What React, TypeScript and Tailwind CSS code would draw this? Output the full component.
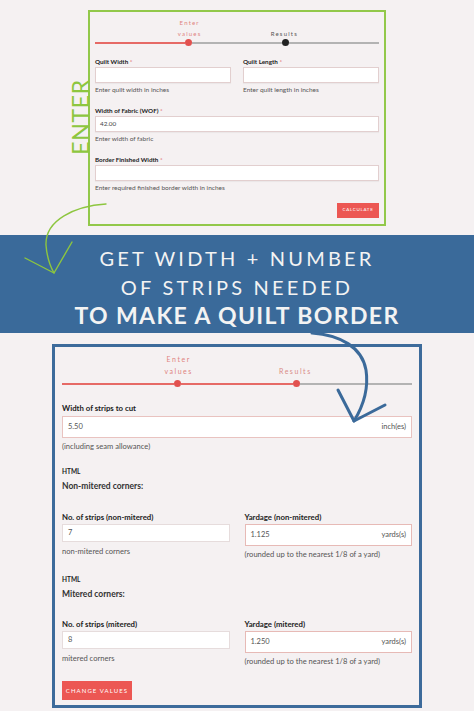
const font = { fontFamily: "Lato, 'Open Sans', sans-serif" };

function Stepper({
  size,
  done,
}: {
  size: "sm" | "md";
  done: boolean;
}) {
  const text =
    size === "sm"
      ? "text-[6px] leading-[11px] tracking-[0.2em]"
      : "text-[7px] leading-[12px] tracking-[0.22em]";
  return (
    <div>
      <div className={`grid grid-cols-6 text-center ${text}`}>
        <div className="col-span-2 col-start-2 text-[#e0837f]">
          Enter
          <br />
          values
        </div>
        <div
          className={`col-span-2 self-end ${done ? "text-[#d98b87]" : "text-[#555]"}`}
        >
          Results
        </div>
      </div>
      <div className={`flex items-center ${size === "sm" ? "" : "mt-[3px]"}`}>
        <div className="h-[2px] flex-1 bg-[#e66a66]" />
        <div className="h-[7px] w-[7px] rounded-full bg-[#e2514f]" />
        <div className={`h-[2px] flex-1 ${done ? "bg-[#e66a66]" : "bg-[#b3b3b3]"}`} />
        <div
          className={`h-[7px] w-[7px] rounded-full ${done ? "bg-[#e2514f]" : "bg-[#222]"}`}
        />
        <div className="h-[2px] flex-1 bg-[#b3b3b3]" />
      </div>
    </div>
  );
}

function EntryField({
  label,
  help,
  value,
  className = "",
}: {
  label: string;
  help: string;
  value?: string;
  className?: string;
}) {
  return (
    <div className={className}>
      <div className="text-[6.3px] font-bold leading-[9px] text-[#222]">
        {label} <span className="font-normal text-[#e0605d]">*</span>
      </div>
      <div className="mt-px flex h-[16px] items-center border border-[#e2cfcf] bg-white px-[4px] text-[6.3px] text-[#444] shadow-[0_1px_1px_rgba(0,0,0,0.04)]">
        {value}
      </div>
      <div className="mt-[2px] text-[6.5px] leading-[9px] text-[#555]">{help}</div>
    </div>
  );
}

function ResultField({
  label,
  value,
  unit,
  help,
  tall,
  className = "",
}: {
  label: string;
  value: string;
  unit?: string;
  help: string;
  tall?: boolean;
  className?: string;
}) {
  return (
    <div className={className}>
      <div className="text-[7.8px] font-bold leading-[10px] text-[#222]">{label}</div>
      <div
        className={`mt-[2px] flex items-center justify-between bg-white px-[5px] text-[7.5px] text-[#555] ${
          tall ? "h-[22px] border border-[#e7bab6]" : "h-[18px] border border-[#e6dcdc]"
        }`}
      >
        <span>{value}</span>
        {unit && <span>{unit}</span>}
      </div>
      <div
        className={`text-[7.6px] leading-[10px] text-[#555] ${tall ? "mt-[3px]" : "mt-[4px]"}`}
      >
        {help}
      </div>
    </div>
  );
}

export default function App() {
  return (
    <div
      className="relative h-[711px] w-[474px] overflow-hidden bg-[#f5f1f2]"
      style={font}
    >
      {/* input form */}
      <div className="pt-[10px]">
        <div className="ml-[88px] w-[298px] border-2 border-[#92c84a] px-[5px] pb-[6px]">
          <div className="pt-[5px]">
            <Stepper size="sm" done={false} />
          </div>

          <div className="mt-[11px] grid grid-cols-2 gap-x-[12px]">
            <EntryField label="Quilt Width" help="Enter quilt width in inches" />
            <EntryField label="Quilt Length" help="Enter quilt length in inches" />
          </div>
          <EntryField
            className="mt-[12px]"
            label="Width of Fabric (WOF)"
            value="42.00"
            help="Enter width of fabric"
          />
          <EntryField
            className="mt-[12px]"
            label="Border Finished Width"
            help="Enter required finished border width in inches"
          />

          <div className="mt-[11px] flex justify-end">
            <button className="h-[15px] w-[42px] bg-[#ec5753] text-[4.5px] tracking-[0.15em] text-white">
              CALCULATE
            </button>
          </div>
        </div>
      </div>

      {/* headline band */}
      <div className="mt-[9px] h-[98px] bg-[#3a6a9a] pt-[9px] text-center text-[#f3f3f3]">
        <div className="text-[20px] leading-[29px] tracking-[0.16em]">
          GET WIDTH + NUMBER
        </div>
        <div className="text-[20px] leading-[29px] tracking-[0.16em]">
          OF STRIPS NEEDED
        </div>
        <div className="text-[23px] font-bold leading-[27px] tracking-[0.06em]">
          TO MAKE A QUILT BORDER
        </div>
      </div>

      {/* results form */}
      <div className="ml-[52px] mt-[11px] w-[370px] border-[3px] border-[#3d6b9b] px-[7px] pb-[5px] pt-[6px]">
        <Stepper size="md" done />

        <div className="mt-[16px]">
          <div className="text-[7.8px] font-bold leading-[10px] text-[#222]">
            Width of strips to cut
          </div>
          <div className="mt-[3px] flex h-[22px] items-center justify-between border border-[#e9c3c0] bg-white px-[5px] text-[7.5px] text-[#555]">
            <span>5.50</span>
            <span>inch(es)</span>
          </div>
          <div className="mt-[3px] text-[7.6px] leading-[10px] text-[#555]">
            (including seam allowance)
          </div>
        </div>

        <div className="mt-[16px] text-[6.5px] font-bold leading-[10px] text-[#222]">
          HTML
        </div>
        <div className="mt-[3px] text-[8.5px] font-bold leading-[12px] text-[#333]">
          Non-mitered corners:
        </div>

        <div className="mt-[20px] grid grid-cols-2 items-start gap-x-[15px]">
          <ResultField
            label="No. of strips (non-mitered)"
            value="7"
            help="non-mitered corners"
          />
          <ResultField
            label="Yardage (non-mitered)"
            value="1.125"
            unit="yards(s)"
            help="(rounded up to the nearest 1/8 of a yard)"
            tall
          />
        </div>

        <div className="mt-[16px] text-[6.5px] font-bold leading-[10px] text-[#222]">
          HTML
        </div>
        <div className="mt-[3px] text-[8.5px] font-bold leading-[12px] text-[#333]">
          Mitered corners:
        </div>

        <div className="mt-[19px] grid grid-cols-2 items-start gap-x-[15px]">
          <ResultField label="No. of strips (mitered)" value="8" help="mitered corners" />
          <ResultField
            label="Yardage (mitered)"
            value="1.250"
            unit="yards(s)"
            help="(rounded up to the nearest 1/8 of a yard)"
            tall
          />
        </div>

        <button className="mt-[15px] h-[19px] w-[70px] bg-[#ec5753] text-[6px] tracking-[0.18em] text-white">
          CHANGE VALUES
        </button>
      </div>

      {/* side caption */}
      <div className="absolute left-[80px] top-[117px] -translate-x-1/2 -translate-y-1/2 -rotate-90 text-[23px] font-normal leading-none tracking-[0.03em] text-[#8dc63f]">
        ENTER
      </div>

      {/* hand-drawn arrows */}
      <svg
        className="pointer-events-none absolute inset-0"
        width="474"
        height="711"
        viewBox="0 0 474 711"
        fill="none"
      >
        <path
          d="M106 204 C 75 206 45 220 46 245 C 47 258 50 266 54 273"
          stroke="#8dc63f"
          strokeWidth="1.4"
          strokeLinecap="round"
        />
        <path
          d="M25 258 L54 273 L72 242"
          stroke="#8dc63f"
          strokeWidth="1.4"
          strokeLinecap="round"
          strokeLinejoin="round"
        />
        <path
          d="M312 333 C 340 335 362 347 366 370 C 369 390 362 408 354 421"
          stroke="#3b6a9a"
          strokeWidth="3"
          strokeLinecap="round"
        />
        <path
          d="M338 390 L354 421 L385 405"
          stroke="#3b6a9a"
          strokeWidth="3"
          strokeLinecap="round"
          strokeLinejoin="round"
        />
      </svg>
    </div>
  );
}
